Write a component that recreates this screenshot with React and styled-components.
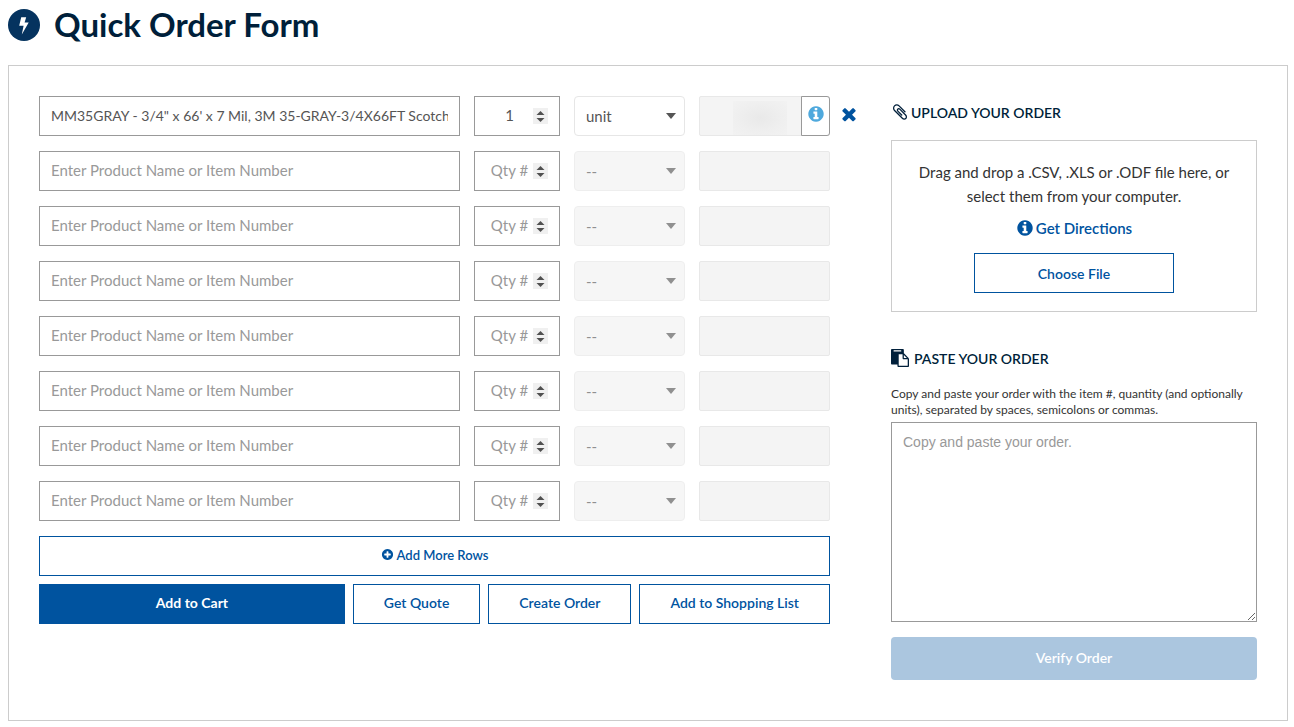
import React, { useState } from "react";
import styled, { createGlobalStyle, css } from "styled-components";

const paths = {
  info: "M1152 1376v-160q0-14-9-23t-23-9h-96v-512q0-14-9-23t-23-9h-320q-14 0-23 9t-9 23v160q0 14 9 23t23 9h96v320h-96q-14 0-23 9t-9 23v160q0 14 9 23t23 9h448q14 0 23-9t9-23zm-128-896v-160q0-14-9-23t-23-9h-192q-14 0-23 9t-9 23v160q0 14 9 23t23 9h192q14 0 23-9t9-23zm640 416q0 209-103 385.500t-279.500 279.500-385.500 103-385.500-103-279.500-279.500-103-385.500 103-385.500 279.500-279.500 385.500-103 385.500 103 279.500 279.500 103 385.500z",
  plus: "M1344 960v-128q0-26-19-45t-45-19h-256v-256q0-26-19-45t-45-19h-128q-26 0-45 19t-19 45v256h-256q-26 0-45 19t-19 45v128q0 26 19 45t45 19h256v256q0 26 19 45t45 19h128q26 0 45-19t19-45v-256h256q26 0 45-19t19-45zm320-64q0 209-103 385.500t-279.500 279.500-385.500 103-385.500-103-279.500-279.500-103-385.500 103-385.500 279.500-279.500 385.500-103 385.500 103 279.500 279.500 103 385.500z",
  times: "M1490 1322q0 40-28 68l-136 136q-28 28-68 28t-68-28l-294-294-294 294q-28 28-68 28t-68-28l-136-136q-28-28-28-68t28-68l294-294-294-294q-28-28-28-68t28-68l136-136q28-28 68-28t68 28l294 294 294-294q28-28 68-28t68 28l136 136q28 28 28 68t-28 68l-294 294 294 294q28 28 28 68z",
  paste: "M768 1664h896v-640h-416q-40 0-68-28t-28-68v-416h-384v1152zm256-1440v-64q0-13-9.500-22.500t-22.500-9.500h-704q-13 0-22.500 9.500t-9.500 22.500v64q0 13 9.500 22.500t22.500 9.500h704q13 0 22.500-9.500t9.500-22.500zm256 672h299l-299-299v299zm512 128v672q0 40-28 68t-68 28h-960q-40 0-68-28t-28-68v-160h-544q-40 0-68-28t-28-68v-1344q0-40 28-68t68-28h1088q40 0 68 28t28 68v328q21 13 36 28l408 408q28 28 48 76t20 88z",
  clip: "M1596 1385q0 117-79 196t-196 79q-135 0-235-100l-777-776q-113-115-113-271 0-159 110-270t269-111q158 0 273 113l605 606q10 10 10 22 0 16-30.500 46.500t-46.500 30.500q-13 0-23-10l-606-607q-79-77-181-77-106 0-179 75t-73 181q0 105 76 181l776 777q63 63 145 63 64 0 106-42t42-106q0-82-63-145l-581-581q-26-24-60-24-29 0-48 19t-19 48q0 32 25 59l410 410q10 10 10 22 0 16-31 47t-47 31q-12 0-22-10l-410-410q-63-61-63-149 0-82 57-139t139-57q88 0 149 63l581 581q100 98 100 235z",
};

const Icon = ({ name, size }) => (
  <svg width={size} height={size} viewBox="0 0 1792 1792" fill="currentColor" aria-hidden="true">
    <path d={paths[name]} />
  </svg>
);

const Bolt = () => (
  <svg width="32" height="32" viewBox="0 0 32 32" aria-hidden="true">
    <circle cx="16" cy="16" r="16" fill="#05335f" />
    <path d="M13.200 8.200h5l-1.600 5.300h4.100l-6.900 12 1.800-8.700h-4.400z" fill="#fff" />
  </svg>
);

const firstProduct = `MM35GRAY - 3/4" x 66' x 7 Mil, 3M 35-GRAY-3/4X66FT Scotch®`;

const App = () => {
  const [rows, setRows] = useState([
    { product: firstProduct, qty: "1" },
    {}, {}, {}, {}, {}, {}, {},
  ]);

  const clearRow = (i) => setRows(rows.map((row, n) => (n === i ? {} : row)));

  return (
    <Page>
      <GlobalStyle />
      <Title>
        <Bolt />
        <h1>Quick Order Form</h1>
      </Title>
      <Panel>
        <OrderForm onSubmit={(e) => e.preventDefault()}>
          {rows.map((row, i) => (
            <Row key={i + (row.product ? "f" : "e")}>
              <Fields>
                <TextInput
                  type="text"
                  aria-label="Product"
                  placeholder="Enter Product Name or Item Number"
                  defaultValue={row.product}
                />
                <QtyInput type="number" min="1" aria-label="Quantity" placeholder="Qty #" defaultValue={row.qty} />
                <UnitBox $off={!row.product}>
                  <select aria-label="Unit" disabled={!row.product}>
                    <option>{row.product ? "unit" : "--"}</option>
                  </select>
                </UnitBox>
                <Price>
                  {row.product && <PriceBlur />}
                  {row.product && (
                    <InfoButton type="button" aria-label="Price details">
                      <Icon name="info" size={18} />
                    </InfoButton>
                  )}
                </Price>
              </Fields>
              <RemoveCell>
                {row.product && (
                  <RemoveButton type="button" aria-label="Remove row" onClick={() => clearRow(i)}>
                    <Icon name="times" size={20} />
                  </RemoveButton>
                )}
              </RemoveCell>
            </Row>
          ))}
          <Actions>
            <MoreButton type="button" onClick={() => setRows([...rows, {}])}>
              <Icon name="plus" size={13} />
              Add More Rows
            </MoreButton>
            <ButtonRow>
              <CartButton type="submit">Add to Cart</CartButton>
              <Button type="button">Get Quote</Button>
              <Button type="button">Create Order</Button>
              <Button type="button">Add to Shopping List</Button>
            </ButtonRow>
          </Actions>
        </OrderForm>

        <Side>
          <SideTitle>
            <Icon name="clip" size={18} />
            Upload your order
          </SideTitle>
          <DropZone>
            <p>Drag and drop a .CSV, .XLS or .ODF file here, or select them from your computer.</p>
            <Directions href="#directions">
              <Icon name="info" size={18} />
              Get Directions
            </Directions>
            <ChooseButton type="button">Choose File</ChooseButton>
          </DropZone>
          <PasteTitle>
            <Icon name="paste" size={18} />
            Paste your order
          </PasteTitle>
          <Hint htmlFor="paste">
            Copy and paste your order with the item #, quantity (and optionally units), separated by spaces,
            semicolons or commas.
          </Hint>
          <PasteArea id="paste" placeholder="Copy and paste your order." />
          <VerifyButton type="button" disabled>
            Verify Order
          </VerifyButton>
        </Side>
      </Panel>
    </Page>
  );
};

export default App;

// Styles
const GlobalStyle = createGlobalStyle`
  * {
    box-sizing: border-box;
  }

  body {
    margin: 0;
    background: #fff;
    color: #333;
    font-family: Lato, sans-serif;
    font-size: 15px;
  }

  button, input, select {
    font-family: inherit;
  }

  button {
    cursor: pointer;
  }

  svg {
    flex: none;
    display: block;
  }
`;

const Page = styled.main`
  padding: 5px 6px 6px 8px;
`;

const Title = styled.header`
  display: flex;
  align-items: center;
  gap: 14px;
  height: 40px;

  h1 {
    margin: 0;
    padding-bottom: 2px;
    color: #001f3a;
    font-size: 33px;
    font-weight: 700;
    line-height: 38px;
  }
`;

const Panel = styled.section`
  display: grid;
  grid-template-columns: minmax(0, 1fr) 366px;
  gap: 35px;
  margin-top: 20px;
  padding: 30px 30px 40px;
  border: 1px solid #ccc;
`;

const OrderForm = styled.form`
  min-width: 0;
`;

const Row = styled.div`
  display: flex;
  align-items: center;
  gap: 12px;
  margin-bottom: 15px;
`;

const Fields = styled.div`
  flex: 1;
  display: grid;
  grid-template-columns: minmax(0, 1fr) 86px 111px 131px;
  gap: 14px;
`;

const field = css`
  width: 100%;
  height: 40px;
  border: 1px solid #999;
  border-radius: 0;
  background: #fff;
  color: #555;
  outline: none;

  &::placeholder {
    color: #999;
    opacity: 1;
  }

  &:focus {
    border-color: #00539f;
  }
`;

const TextInput = styled.input`
  ${field}
  padding: 0 11px 2px;
  font-size: 14px;

  &::placeholder {
    font-size: 15px;
  }
`;

const spinner = `url("data:image/svg+xml,%3Csvg xmlns='http://www.w3.org/2000/svg' width='15' height='16'%3E%3Cpath fill='%23f0f0f0' d='M0 0h15v16H0z'/%3E%3Cpath fill='%23505050' d='M3.500 7l4-4 4 4zM3.500 10l4 4 4-4z'/%3E%3C/svg%3E")`;

const QtyInput = styled.input`
  ${field}
  padding: 0 11px 2px;
  font-size: 15px;
  text-align: center;

  &::-webkit-inner-spin-button {
    -webkit-appearance: none;
    width: 15px;
    height: 16px;
    margin-top: 2px;
    background: ${spinner} no-repeat;
    opacity: 1;
  }
`;

const UnitBox = styled.div`
  position: relative;
  opacity: ${(props) => (props.$off ? 0.65 : 1)};

  select {
    appearance: none;
    display: block;
    width: 100%;
    height: 40px;
    padding: 0 11px;
    border: 1px solid #e6e6e6;
    border-radius: 4px;
    background: ${(props) => (props.$off ? "#f2f2f2" : "#fff")};
    color: #555;
    font-size: 15px;
    opacity: 1;
  }

  &::after {
    content: "";
    position: absolute;
    top: 17px;
    right: 9px;
    border: 5px solid transparent;
    border-top: 6px solid #555;
    border-bottom: 0;
    pointer-events: none;
  }
`;

const Price = styled.div`
  display: flex;
  justify-content: flex-end;
  height: 40px;
  border: 1px solid #e8e8e8;
  border-radius: 2px;
  background: #f4f4f4;
`;

const PriceBlur = styled.div`
  width: 54px;
  margin: 4px 15px 0 0;
  background: radial-gradient(ellipse at center, #e9e9e9 0%, #efefef 60%, #f2f2f2 100%);
`;

const InfoButton = styled.button`
  display: flex;
  justify-content: center;
  width: 29px;
  height: 40px;
  margin: -1px;
  padding: 8px 0 0;
  border: 1px solid #999;
  border-radius: 0 3px 3px 0;
  background: #fff;
  color: #4fa9dd;
`;

const RemoveCell = styled.div`
  display: flex;
  justify-content: center;
  width: 14px;
`;

const RemoveButton = styled.button`
  padding: 0 0 4px;
  border: 0;
  background: none;
  color: #00539f;
`;

const Actions = styled.div`
  display: flex;
  flex-direction: column;
  gap: 8px;
  padding-right: 26px;
`;

const ButtonRow = styled.div`
  display: flex;
  gap: 8px;
`;

const Button = styled.button`
  height: 40px;
  padding: 0 30px 3px;
  border: 1px solid #00539f;
  border-radius: 0;
  background: #fff;
  color: #00539f;
  font-size: 14px;
  font-weight: 600;
  white-space: nowrap;
`;

const CartButton = styled(Button)`
  flex: 1;
  background: #00539f;
  color: #fff;
  font-weight: 700;
`;

const MoreButton = styled(Button)`
  display: flex;
  align-items: center;
  justify-content: center;
  gap: 3px;
  font-size: 13px;
`;

const Side = styled.aside`
  display: flex;
  flex-direction: column;
`;

const SideTitle = styled.h2`
  display: flex;
  align-items: center;
  gap: 2px;
  height: 20px;
  margin: 6px 0 18px;
  color: #001f3a;
  font-size: 14px;
  font-weight: 600;
  text-transform: uppercase;
`;

const PasteTitle = styled(SideTitle)`
  gap: 5px;
  margin: 36px 0 18px;
`;

const DropZone = styled.div`
  display: flex;
  flex-direction: column;
  align-items: center;
  padding: 19px 24px 18px;
  border: 1px solid #ccc;

  p {
    margin: 0;
    font-size: 15px;
    line-height: 24px;
    text-align: center;
  }
`;

const Directions = styled.a`
  display: flex;
  align-items: center;
  gap: 2px;
  margin: 8px 0 13px;
  color: #00539f;
  font-size: 15px;
  font-weight: 600;
  line-height: 24px;
  text-decoration: none;
`;

const ChooseButton = styled(Button)`
  width: 200px;
  padding-bottom: 0;
`;

const Hint = styled.label`
  margin-bottom: 4px;
  font-size: 12px;
  line-height: 16px;
`;

const PasteArea = styled.textarea`
  ${field}
  height: 200px;
  padding: 11px;
  font-family: "Liberation Sans", Arial, sans-serif;
  font-size: 14px;
  resize: vertical;
`;

const VerifyButton = styled.button`
  height: 43px;
  margin-top: 15px;
  padding-bottom: 3px;
  border: 0;
  border-radius: 4px;
  background: #abc6df;
  color: #fff;
  font-size: 14px;
  font-weight: 600;
`;
